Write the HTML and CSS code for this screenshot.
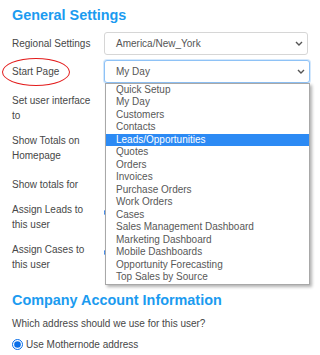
FILE: index.html
```html
<!DOCTYPE html>
<html lang="en">
<head>
    <meta charset="UTF-8">
    <meta name="viewport" content="width=device-width, initial-scale=1.0">
    <title>General Settings</title>
    <link rel="stylesheet" href="styles.css">
</head>
<body>
    <h2 class="section-title">General Settings</h2>

    <div class="form-row tight">
        <label class="form-label">Regional Settings</label>
        <div class="select-box">
            <span>America/New_York</span>
            <svg class="chevron" width="8" height="5" viewBox="0 0 8 5"><path d="M1 1l3 3 3-3"/></svg>
        </div>
    </div>

    <div class="form-row tight start-row">
        <span class="callout"></span>
        <label class="form-label">Start Page</label>
        <div class="select-wrap">
            <div class="select-box focused">
                <span>My Day</span>
                <svg class="chevron" width="8" height="5" viewBox="0 0 8 5"><path d="M1 1l3 3 3-3"/></svg>
            </div>
            <ul class="select-list">
                <li>Quick Setup</li>
                <li>My Day</li>
                <li>Customers</li>
                <li>Contacts</li>
                <li class="active">Leads/Opportunities</li>
                <li>Quotes</li>
                <li>Orders</li>
                <li>Invoices</li>
                <li>Purchase Orders</li>
                <li>Work Orders</li>
                <li>Cases</li>
                <li>Sales Management Dashboard</li>
                <li>Marketing Dashboard</li>
                <li>Mobile Dashboards</li>
                <li>Opportunity Forecasting</li>
                <li>Top Sales by Source</li>
            </ul>
        </div>
    </div>

    <!-- these controls sit under the open dropdown -->
    <div class="form-row">
        <label class="form-label">Set user interface to</label>
        <div class="field-blank"></div>
    </div>

    <div class="form-row">
        <label class="form-label">Show Totals on Homepage</label>
        <div class="field-blank"></div>
    </div>

    <div class="form-row">
        <label class="form-label">Show totals for</label>
        <div class="field-blank tall"></div>
    </div>

    <div class="form-row snug">
        <label class="form-label">Assign Leads to this user</label>
        <div class="choice"><input type="radio" name="leads" checked></div>
    </div>

    <div class="form-row">
        <label class="form-label">Assign Cases to this user</label>
        <div class="choice"><input type="radio" name="cases" checked></div>
    </div>

    <h2 class="section-title spaced">Company Account Information</h2>
    <p class="question">Which address should we use for this user?</p>
    <label class="radio-line"><input type="radio" name="address" checked> Use Mothernode address</label>
</body>
</html>
```

FILE: styles.css
```css
body {
    margin: 0;
    padding: 0 12px;
    font-family: "Liberation Sans", Arial, sans-serif;
    font-size: 10px;
    line-height: 15px;
    color: #474747;
    background-color: #fff;
    overflow: hidden;
}

.section-title {
    margin: 7px 0 8px;
    font-size: 14.4px;
    line-height: 17px;
    font-weight: bold;
    color: #1b9bf0;
}

.section-title.spaced {
    margin-top: 20px;
    margin-bottom: 0;
}

.form-row {
    display: flex;
    align-items: center;
    margin-top: 10px;
}

.form-row.tight {
    margin-top: 5px;
}

.form-row.snug {
    margin-top: 6px;
}

.start-row {
    position: relative;
}

.form-label {
    width: 84px;
    margin-right: 8px;
    flex-shrink: 0;
}

.select-box {
    display: flex;
    align-items: center;
    justify-content: space-between;
    box-sizing: border-box;
    width: 206px;
    height: 23px;
    padding: 0 4px 0 11px;
    border: 1px solid #d6d6d6;
    border-radius: 3px;
    color: #555;
    background-color: #fff;
}

.select-box.focused {
    border-color: #8ec2f6;
    box-shadow: 0 0 0 1px #d4e8fc;
}

.chevron {
    fill: none;
    stroke: #555;
    stroke-width: 1.4;
}

.select-wrap {
    position: relative;
}

.select-list {
    position: absolute;
    top: 23px;
    left: 1px;
    z-index: 2;
    width: 203px;
    margin: 0;
    padding: 0;
    list-style: none;
    background-color: #fff;
    border: 1px solid #a8a8a8;
    box-shadow: 2px 2px 3px rgba(0, 0, 0, 0.3);
}

.select-list li {
    height: 12.47px;
    padding-left: 10px;
    line-height: 12.47px;
    color: #585858;
    white-space: nowrap;
}

.select-list li.active {
    background-color: #2c8af4;
    color: #fff;
}

.callout {
    position: absolute;
    left: -10px;
    top: -2px;
    width: 68px;
    height: 28px;
    box-sizing: border-box;
    border: 1.5px solid #e31b1b;
    border-radius: 50%;
}

.field-blank {
    width: 206px;
    height: 15px;
}

.field-blank.tall {
    height: 23px;
}

.choice {
    display: flex;
    align-items: center;
    align-self: flex-start;
    margin-top: 5px;
}

.choice input {
    width: 11px;
    height: 11px;
    margin: 0;
    accent-color: #1a73e8;
}

.question {
    margin: 7px 0 0;
}

.radio-line {
    display: flex;
    align-items: center;
    margin-top: 6px;
}

.radio-line input {
    width: 11px;
    height: 11px;
    margin: 0 3px 0 0;
    accent-color: #0a6fe8;
}
```
